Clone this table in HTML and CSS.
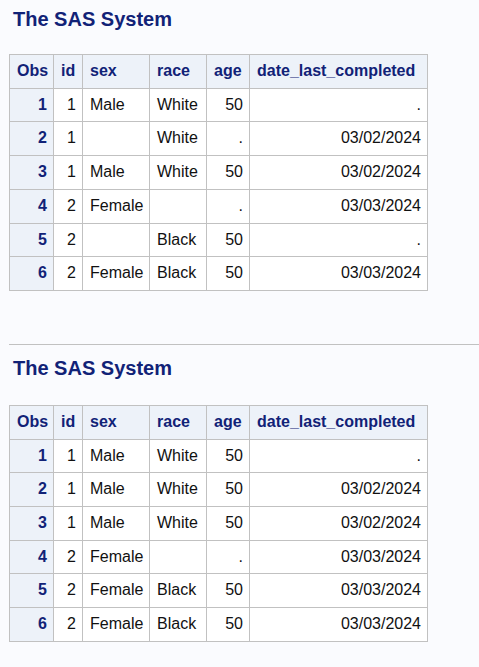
FILE: index.html
```html
<!DOCTYPE html>
<html>
<head>
<meta charset="utf-8">
<link rel="stylesheet" href="styles.css">
</head>
<body>
<div class="page">
  <div class="title">The SAS System</div>
  <table class="data">
    <colgroup>
      <col class="c-obs"><col class="c-id"><col class="c-sex"><col class="c-race"><col class="c-age"><col class="c-date">
    </colgroup>
    <thead>
      <tr><th>Obs</th><th>id</th><th>sex</th><th>race</th><th>age</th><th>date_last_completed</th></tr>
    </thead>
    <tbody>
      <tr><th class="obs">1</th><td class="r">1</td><td>Male</td><td>White</td><td class="r">50</td><td class="r">.</td></tr>
      <tr><th class="obs">2</th><td class="r">1</td><td></td><td>White</td><td class="r">.</td><td class="r">03/02/2024</td></tr>
      <tr><th class="obs">3</th><td class="r">1</td><td>Male</td><td>White</td><td class="r">50</td><td class="r">03/02/2024</td></tr>
      <tr><th class="obs">4</th><td class="r">2</td><td>Female</td><td></td><td class="r">.</td><td class="r">03/03/2024</td></tr>
      <tr><th class="obs">5</th><td class="r">2</td><td></td><td>Black</td><td class="r">50</td><td class="r">.</td></tr>
      <tr><th class="obs">6</th><td class="r">2</td><td>Female</td><td>Black</td><td class="r">50</td><td class="r">03/03/2024</td></tr>
    </tbody>
  </table>

  <hr class="pagebreak">

  <div class="title">The SAS System</div>
  <table class="data after-break">
    <colgroup>
      <col class="c-obs"><col class="c-id"><col class="c-sex"><col class="c-race"><col class="c-age"><col class="c-date">
    </colgroup>
    <thead>
      <tr><th>Obs</th><th>id</th><th>sex</th><th>race</th><th>age</th><th>date_last_completed</th></tr>
    </thead>
    <tbody>
      <tr><th class="obs">1</th><td class="r">1</td><td>Male</td><td>White</td><td class="r">50</td><td class="r">.</td></tr>
      <tr><th class="obs">2</th><td class="r">1</td><td>Male</td><td>White</td><td class="r">50</td><td class="r">03/02/2024</td></tr>
      <tr><th class="obs">3</th><td class="r">1</td><td>Male</td><td>White</td><td class="r">50</td><td class="r">03/02/2024</td></tr>
      <tr><th class="obs">4</th><td class="r">2</td><td>Female</td><td></td><td class="r">.</td><td class="r">03/03/2024</td></tr>
      <tr><th class="obs">5</th><td class="r">2</td><td>Female</td><td>Black</td><td class="r">50</td><td class="r">03/03/2024</td></tr>
      <tr><th class="obs">6</th><td class="r">2</td><td>Female</td><td>Black</td><td class="r">50</td><td class="r">03/03/2024</td></tr>
    </tbody>
  </table>
</div>
</body>
</html>
```
FILE: styles.css
```css
html, body {
  margin: 0;
  padding: 0;
  background: #fafbfe;
}
body {
  font-family: "Liberation Sans", Arial, sans-serif;
  color: #000;
  overflow: hidden;
}
.page {
  padding: 8px 0 0 9px;
}
.title {
  font-size: 20px;
  line-height: 23px;
  font-weight: bold;
  color: #112277;
  margin: 0 0 0 4px;
}
table.data {
  border-collapse: collapse;
  table-layout: fixed;
  width: 418px;
  margin-top: 23px;
  font-size: 16px;
  border: 1px solid #c1c1c1;
}
table.data.after-break {
  margin-top: 25px;
}
.c-obs { width: 44px; }
.c-id { width: 29px; }
.c-sex { width: 67px; }
.c-race { width: 57px; }
.c-age { width: 43px; }
.c-date { width: 178px; }
table.data th,
table.data td {
  border: 1px solid #c1c1c1;
  padding: 7px 6px 7px 7px;
  line-height: 18.7px;
  height: 18.7px;
  white-space: nowrap;
}
table.data thead th {
  background: #edf2f9;
  color: #112277;
  font-weight: bold;
  text-align: left;
}
table.data th.obs {
  background: #edf2f9;
  color: #112277;
  font-weight: bold;
  text-align: right;
}
table.data td {
  background: #ffffff;
  color: #111;
  text-align: left;
}
table.data td.r {
  text-align: right;
}
hr.pagebreak {
  border: 0;
  border-top: 1px solid #c1c1c1;
  height: 0;
  margin: 53px 0 12px 0;
}
```
